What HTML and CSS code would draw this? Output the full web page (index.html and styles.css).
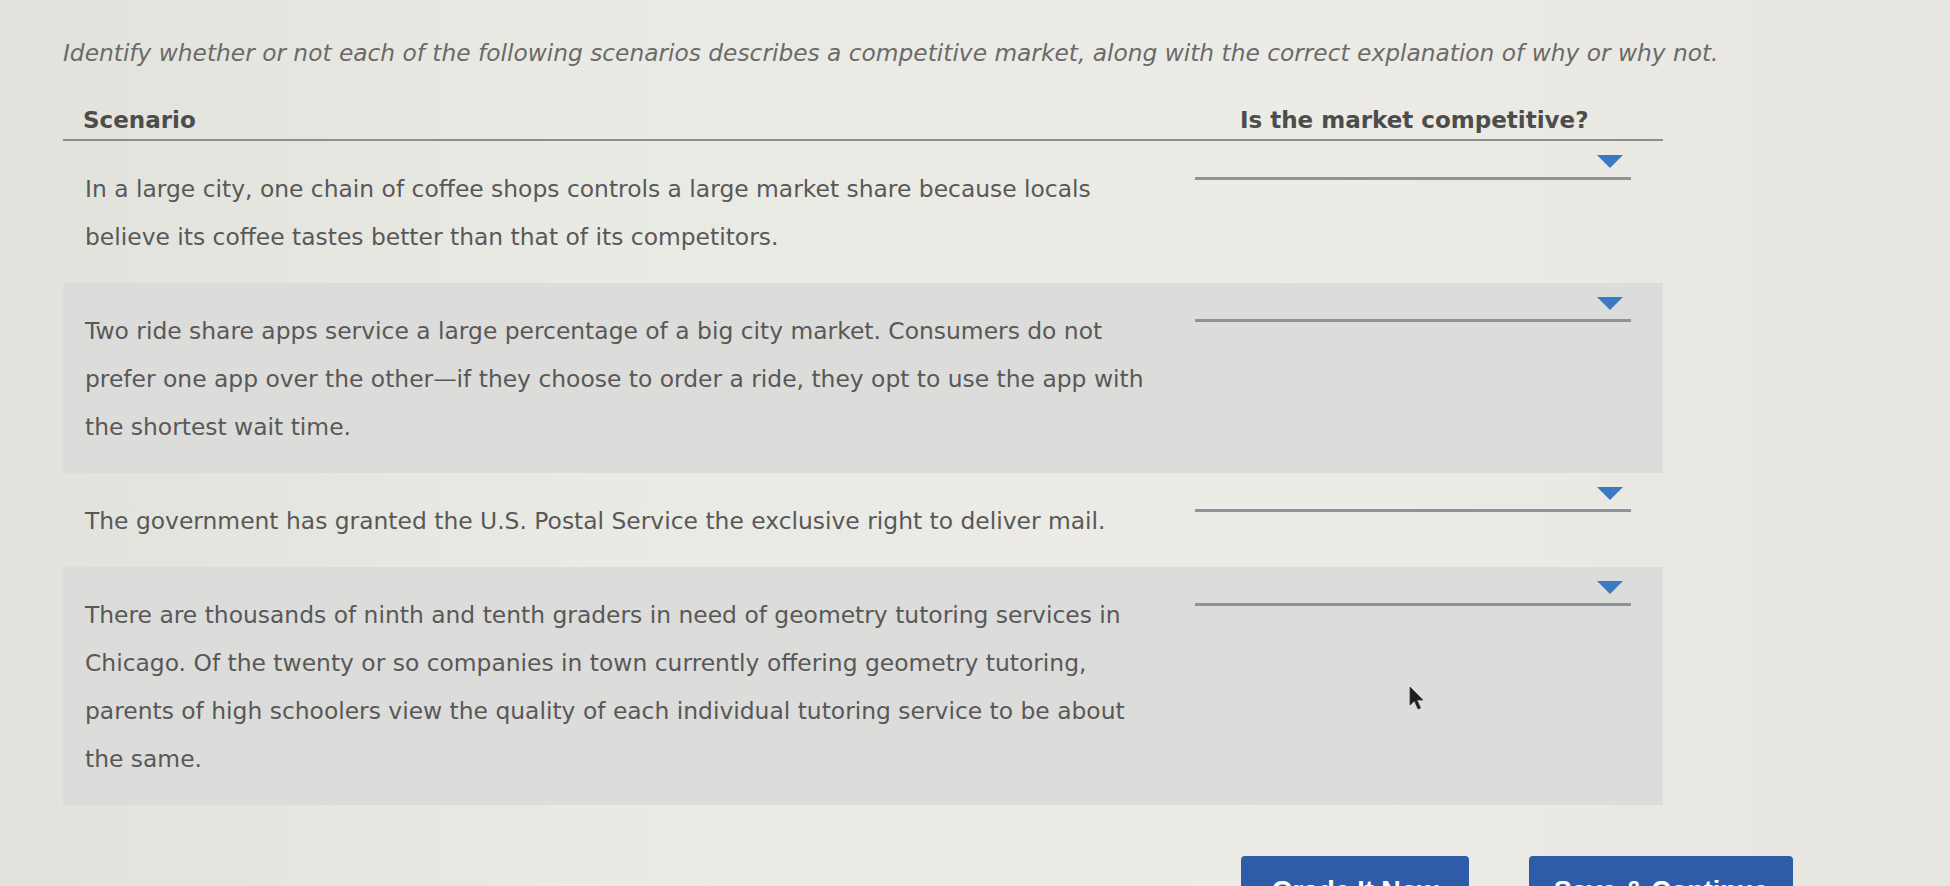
FILE: index.html
```html
<!DOCTYPE html>
<html lang="en">
<head>
<meta charset="utf-8">
<title>Competitive markets</title>
<link rel="stylesheet" href="styles.css">
</head>
<body>
<main class="page">
  <p class="instructions">Identify whether or not each of the following scenarios describes a competitive market, along with the correct explanation of why or why not.</p>
  <div class="table">
    <div class="head">
      <div class="col-scenario">Scenario</div>
      <div class="col-answer">Is the market competitive?</div>
    </div>
    <div class="row">
      <div class="col-scenario">In a large city, one chain of coffee shops controls a large market share because locals<br>believe its coffee tastes better than that of its competitors.</div>
      <div class="col-answer"><div class="select"><span class="caret"></span></div></div>
    </div>
    <div class="row shaded">
      <div class="col-scenario">Two ride share apps service a large percentage of a big city market. Consumers do not<br>prefer one app over the other—if they choose to order a ride, they opt to use the app with<br>the shortest wait time.</div>
      <div class="col-answer"><div class="select"><span class="caret"></span></div></div>
    </div>
    <div class="row">
      <div class="col-scenario">The government has granted the U.S. Postal Service the exclusive right to deliver mail.</div>
      <div class="col-answer"><div class="select"><span class="caret"></span></div></div>
    </div>
    <div class="row shaded">
      <div class="col-scenario">There are thousands of ninth and tenth graders in need of geometry tutoring services in<br>Chicago. Of the twenty or so companies in town currently offering geometry tutoring,<br>parents of high schoolers view the quality of each individual tutoring service to be about<br>the same.</div>
      <div class="col-answer"><div class="select"><span class="caret"></span></div></div>
    </div>
  </div>
  <div class="actions">
    <button class="btn btn-grade" type="button">Grade It Now</button>
    <button class="btn btn-save" type="button">Save &amp; Continue</button>
  </div>
</main>
<svg class="cursor" width="16" height="26" viewBox="0 0 16 26" aria-hidden="true">
  <path d="M1 1 L1 19 L5.5 15 L9 23 L11.5 22 L8 14 L14 14 Z" fill="#1e1e1e" stroke="#3a3a3a" stroke-width="0.8"/>
</svg>
</body>
</html>
```
FILE: styles.css
```css
html, body {
  margin: 0;
  height: 100%;
  overflow: hidden;
}
body {
  background: linear-gradient(90deg, #e2e2dc 0%, #eaeae4 30%, #ecebe6 70%, #e6e5df 100%);
  font-family: "DejaVu Sans", Verdana, sans-serif;
  color: #585858;
  position: relative;
}
.page {
  margin-left: 63px;
  width: 1600px;
  padding-top: 38px;
}
.instructions {
  margin: 0;
  font-style: italic;
  font-size: 23.3px;
  line-height: 30px;
  color: #6a6a6a;
  white-space: nowrap;
}
.table {
  margin-top: 37px;
}
.head {
  display: flex;
  border-bottom: 2px solid #8e8e8c;
  font-weight: bold;
  font-size: 23px;
  line-height: 30px;
  color: #4c4c4c;
  padding-bottom: 4px;
}
.head .col-scenario {
  width: 1110px;
  padding-left: 20px;
}
.head .col-answer {
  padding-left: 47px;
}
.row {
  display: flex;
}
.row.shaded {
  background: #dcdcda;
}
.row .col-scenario {
  width: 1110px;
  padding: 24px 0 22px 22px;
  font-size: 23.4px;
  line-height: 48px;
  white-space: nowrap;
}
.row .col-answer {
  padding-top: 14px;
}
.select {
  width: 436px;
  height: 22px;
  border-bottom: 3px solid #8d9399;
  position: relative;
}
.caret {
  position: absolute;
  right: 8px;
  top: 0;
  width: 0;
  height: 0;
  border-left: 13px solid transparent;
  border-right: 13px solid transparent;
  border-top: 13px solid #3d78c4;
}
.actions {
  display: flex;
  gap: 60px;
  margin-top: 51px;
  padding-left: 1178px;
}
.btn {
  flex-shrink: 0;
  border: none;
  border-radius: 4px;
  background: #2f5ca9;
  color: #ffffff;
  font-family: "Liberation Sans", Arial, sans-serif;
  font-weight: bold;
  font-size: 27px;
  line-height: 32px;
  padding: 19px 0 20px;
  white-space: nowrap;
  cursor: pointer;
}
.btn-grade {
  width: 228px;
}
.btn-save {
  width: 264px;
}
.cursor {
  position: absolute;
  left: 1409px;
  top: 686px;
}
```
